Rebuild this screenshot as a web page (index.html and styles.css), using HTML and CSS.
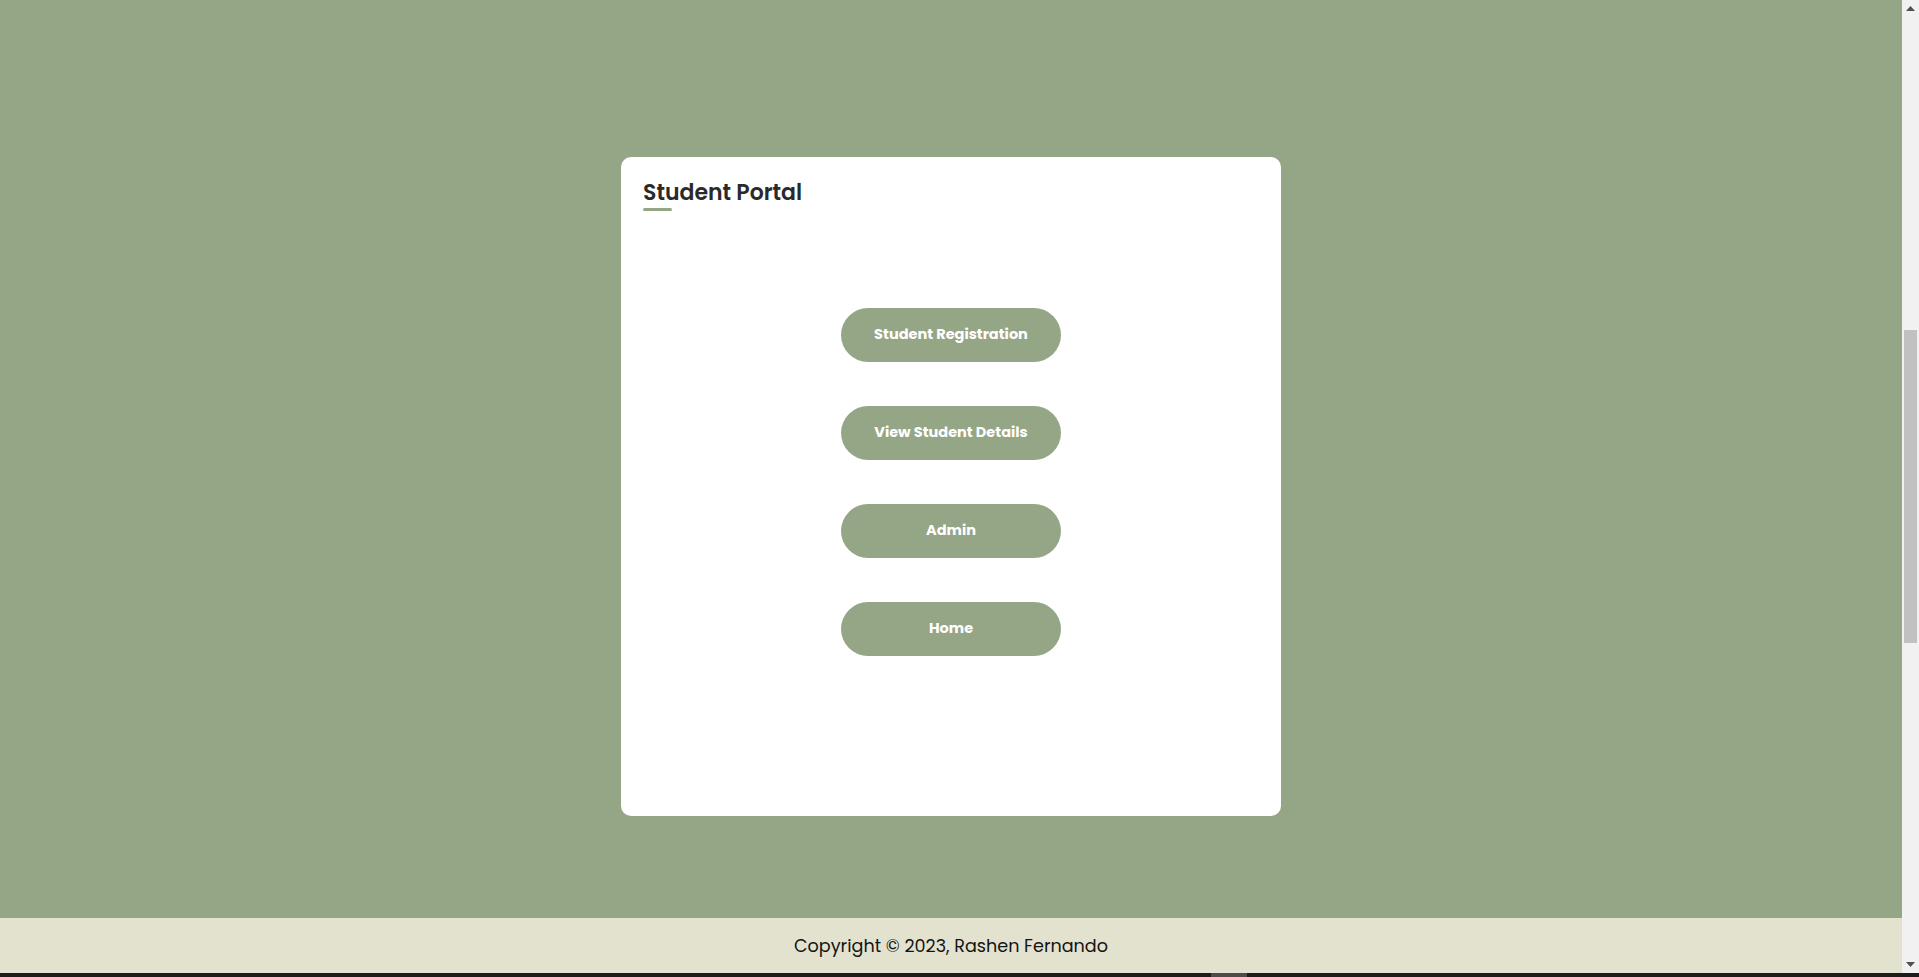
FILE: index.html
```html
<!DOCTYPE html>
<html lang="en">
<head>
<meta charset="utf-8">
<title>Student Portal</title>
<link rel="stylesheet" href="styles.css">
</head>
<body>
<div class="window">
  <div class="viewport">
    <div class="page">
      <main class="main">
        <section class="card">
          <header class="card-head">
            <h1 class="card-title">Student Portal</h1>
            <span class="title-bar"></span>
          </header>
          <nav class="menu">
            <a class="menu-btn" href="#">Student Registration</a>
            <a class="menu-btn" href="#">View Student Details</a>
            <a class="menu-btn" href="#">Admin</a>
            <a class="menu-btn" href="#">Home</a>
          </nav>
        </section>
      </main>
      <footer class="footer">
        <p class="footer-text">Copyright © 2023, Rashen Fernando</p>
      </footer>
    </div>
    <div class="vscroll">
      <div class="vscroll-btn">
        <svg width="9" height="5" viewBox="0 0 9 5"><path d="M0 5 L4.5 0 L9 5 Z" fill="#505050"/></svg>
      </div>
      <div class="vscroll-track">
        <div class="vscroll-space-top"></div>
        <div class="vscroll-thumb"></div>
      </div>
      <div class="vscroll-btn">
        <svg width="9" height="5" viewBox="0 0 9 5"><path d="M0 0 L9 0 L4.5 5 Z" fill="#505050"/></svg>
      </div>
    </div>
  </div>
  <div class="hstrip">
    <div class="hstrip-left"></div>
    <div class="hstrip-thumb"></div>
  </div>
</div>
</body>
</html>
```

FILE: styles.css
```css
html, body {
  margin: 0;
  padding: 0;
  height: 100%;
  overflow: hidden;
}

body {
  font-family: "Poppins", "Open Sans", "Noto Sans", sans-serif;
  background: #95a686;
}

.window {
  display: flex;
  flex-direction: column;
  height: 977px;
}

.viewport {
  display: flex;
  flex-direction: row;
  height: 973px;
}

.page {
  flex: 1;
  display: flex;
  flex-direction: column;
  min-width: 0;
}

.main {
  flex: 1;
  display: flex;
  justify-content: center;
  align-items: flex-start;
  padding-top: 157px;
  background: #95a686;
}

.card {
  box-sizing: border-box;
  width: 660px;
  height: 659px;
  background: #ffffff;
  border-radius: 10px;
  padding: 21px 22px;
  display: flex;
  flex-direction: column;
}

.card-head {
  display: flex;
  flex-direction: column;
  align-items: flex-start;
}

.card-title {
  margin: 0;
  font-size: 22px;
  line-height: 30px;
  font-weight: 600;
  color: #2a2a2a;
}

.title-bar {
  display: block;
  width: 29px;
  height: 3px;
  margin-top: 0;
  background: #95a686;
  border-radius: 2px;
}

.menu {
  display: flex;
  flex-direction: column;
  align-items: center;
  gap: 44.5px;
  margin-top: 97px;
}

.menu-btn {
  display: flex;
  align-items: center;
  justify-content: center;
  width: 220px;
  height: 53.5px;
  border-radius: 27px;
  background: #95a686;
  color: #ffffff;
  text-decoration: none;
  font-size: 14.5px;
  font-weight: 700;
}

.footer {
  height: 55px;
  background: #e3e2cf;
  display: flex;
  align-items: center;
  justify-content: center;
}

.footer-text {
  margin: 0;
  font-size: 17.6px;
  font-weight: 400;
  color: #141414;
}

.vscroll {
  width: 17px;
  background: #f1f1f1;
  display: flex;
  flex-direction: column;
}

.vscroll-btn {
  height: 17px;
  display: flex;
  align-items: center;
  justify-content: center;
}

.vscroll-track {
  flex: 1;
  display: flex;
  flex-direction: column;
  align-items: center;
}

.vscroll-space-top {
  height: 313px;
}

.vscroll-thumb {
  width: 13px;
  height: 313px;
  background: #c1c1c1;
}

.hstrip {
  height: 4px;
  background: #1c1c1c;
  display: flex;
}

.hstrip-left {
  width: 1211px;
}

.hstrip-thumb {
  width: 36px;
  background: #4b4b4b;
}
```
